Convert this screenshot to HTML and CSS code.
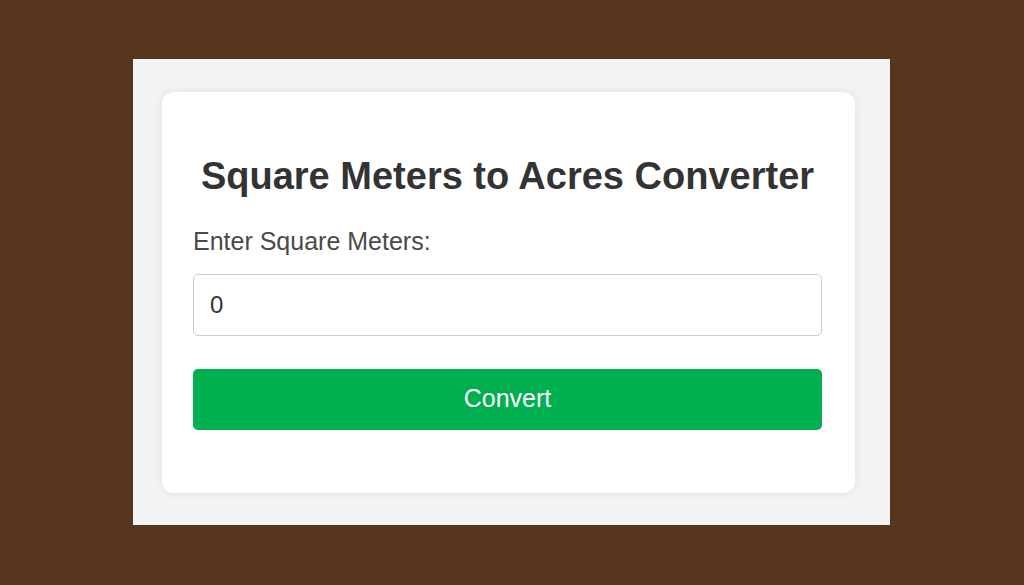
FILE: index.html
```html
<!DOCTYPE html>
<html>
<head>
  <title>Square Meters to Acres Converter</title>
  <link rel="stylesheet" href="styles.css">
</head>
<body>
  <div class="frame">
    <div class="container">
      <h1>Square Meters to Acres Converter</h1>
      <label for="sqm">Enter Square Meters:</label>
      <input type="number" id="sqm" value="0">
      <button type="button" class="convert-btn">Convert</button>
      <div id="result"></div>
    </div>
  </div>
</body>
</html>
```

FILE: styles.css
```css
body {
  margin: 0;
  padding: 59px 0 0 133px;
  background-color: #56361f;
  font-family: "Liberation Sans", Arial, sans-serif;
  height: 585px;
  box-sizing: border-box;
  overflow: hidden;
}

.frame {
  width: 757px;
  height: 466px;
  box-sizing: border-box;
  padding: 33px 35px 32px 29px;
  background-color: #f3f3f3;
}

.container {
  height: 401px;
  box-sizing: border-box;
  padding: 0 33px 0 31px;
  background-color: #fff;
  border-radius: 12px;
  box-shadow: 0 0 8px rgba(0, 0, 0, 0.08);
  overflow: hidden;
}

h1 {
  margin: 62px 0 0;
  text-align: center;
  font-size: 38px;
  line-height: 44px;
  color: #333;
}

label {
  display: block;
  margin-top: 29px;
  font-size: 25px;
  line-height: 28px;
  color: #4a4a4a;
}

input[type="number"] {
  display: block;
  width: 100%;
  height: 62px;
  margin-top: 19px;
  padding: 0 16px;
  box-sizing: border-box;
  border: 1px solid #ccc;
  border-radius: 5px;
  font-family: inherit;
  font-size: 24px;
  color: #333;
  -moz-appearance: textfield;
}

input::-webkit-inner-spin-button {
  -webkit-appearance: none;
}

.convert-btn {
  display: block;
  width: 100%;
  height: 61px;
  margin-top: 33px;
  padding: 0 0 3px;
  border: none;
  border-radius: 5px;
  background-color: #00af50;
  color: #fff;
  font-family: inherit;
  font-size: 25px;
  cursor: pointer;
}
```
